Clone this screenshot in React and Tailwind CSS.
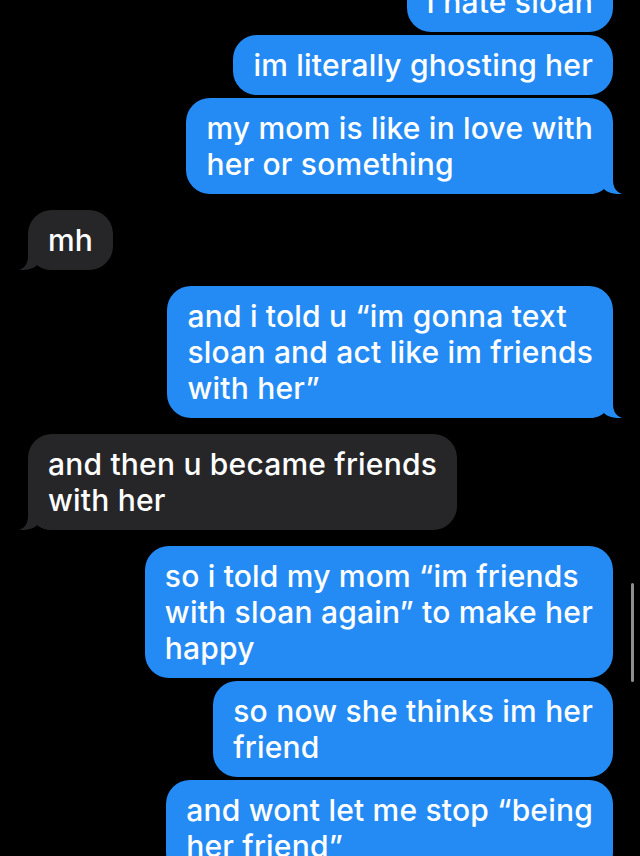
const BLUE = '#248bf5'
const GRAY = '#262628'

const messages = [
  { from: 'me', lines: ['I hate sloan'] },
  { from: 'me', lines: ['im literally ghosting her'] },
  { from: 'me', lines: ['my mom is like in love with', 'her or something'], tail: true },
  { from: 'them', lines: ['mh'], tail: true },
  { from: 'me', lines: ['and i told u \u201cim gonna text', 'sloan and act like im friends', 'with her\u201d'], tail: true },
  { from: 'them', lines: ['and then u became friends', 'with her'], tail: true },
  { from: 'me', lines: ['so i told my mom \u201cim friends', 'with sloan again\u201d to make her', 'happy'] },
  { from: 'me', lines: ['so now she thinks im her', 'friend'] },
  { from: 'me', lines: ['and wont let me stop \u201cbeing', 'her friend\u201d'] },
]

// iMessage-style tail: straight edge flaring out to a tip, with a small notch
function Tail({ side, color }) {
  if (side === 'right') {
    return (
      <svg width="33" height="24" viewBox="0 0 33 24" className="absolute bottom-0 right-[-9px]">
        <path d="M0 0 H24 V10 C24 17 27 22 33 24 C27 24.5 18 23 15 19 C11 22.5 6 24 0 24 Z" fill={color} />
      </svg>
    )
  }
  return (
    <svg width="33" height="24" viewBox="0 0 33 24" className="absolute bottom-0 left-[-9px]">
      <path d="M33 0 H9 V10 C9 17 6 22 0 24 C6 24.5 15 23 18 19 C22 22.5 27 24 33 24 Z" fill={color} />
    </svg>
  )
}

function Bubble({ msg, first }) {
  const mine = msg.from === 'me'
  const color = mine ? BLUE : GRAY
  return (
    <div className={mine ? 'flex justify-end pr-[27px]' : 'flex justify-start pl-[28px]'}>
      <div
        className={`relative w-fit rounded-[24px] px-[20px] py-[12px] text-[30px] font-medium leading-[36px] tracking-[0.2px] text-white ${first ? 'mt-[-28px]' : ''}`}
        style={{ backgroundColor: color }}
      >
        {msg.lines.map((l, i) => (
          <div key={i} className="whitespace-nowrap relative z-10">{l}</div>
        ))}
        {msg.tail && <Tail side={mine ? 'right' : 'left'} color={color} />}
      </div>
    </div>
  )
}

export default function App() {
  return (
    <div
      className="relative h-[856px] w-[640px] overflow-hidden bg-black"
      style={{ fontFamily: 'Inter, "Noto Sans", sans-serif' }}
    >
      <div className="flex flex-col">
        {messages.map((m, i) => {
          const prev = messages[i - 1]
          const gap = i === 0 ? '' : prev.from === m.from ? 'mt-[3px]' : 'mt-[16px]'
          return (
            <div key={i} className={gap}>
              <Bubble msg={m} first={i === 0} />
            </div>
          )
        })}
      </div>

      {/* scroll indicator */}
      <div className="absolute right-[6px] top-[583px] h-[99px] w-[3px] rounded-full bg-[#8e8e90]" />
    </div>
  )
}
